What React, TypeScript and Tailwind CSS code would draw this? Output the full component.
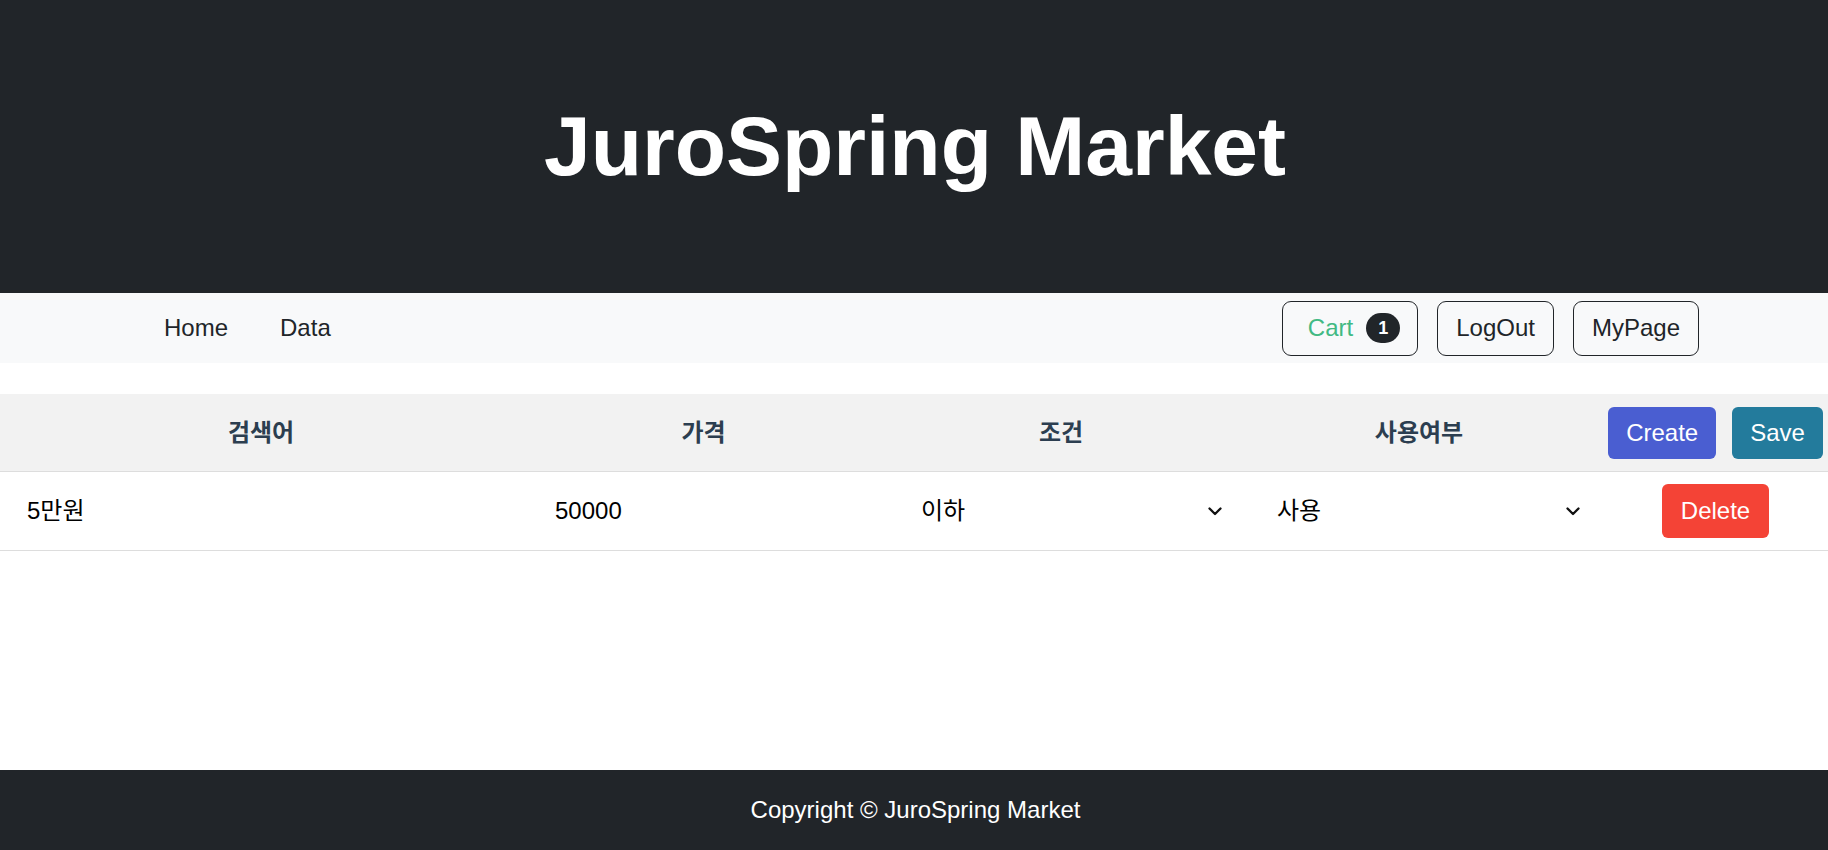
import React from "react";

const FONT = { fontFamily: '"Liberation Sans", Arial, "Noto Sans CJK KR", sans-serif' };

function Chevron() {
  return (
    <svg width="14" height="9" viewBox="0 0 14 9" fill="none" className="pointer-events-none">
      <path d="M1.5 1.5 L7 7 L12.5 1.5" stroke="#111" strokeWidth="2.3" strokeLinecap="round" strokeLinejoin="round" />
    </svg>
  );
}

function SelectCell({ value, options, pl, pr }: { value: string; options: string[]; pl: string; pr: string }) {
  return (
    <div className={`flex items-center justify-between h-full ${pl} ${pr}`}>
      <select
        defaultValue={value}
        className="appearance-none bg-transparent outline-none text-[24px] text-black flex-1"
        style={FONT}
      >
        {options.map((o) => (
          <option key={o} value={o}>
            {o}
          </option>
        ))}
      </select>
      <Chevron />
    </div>
  );
}

export default function App() {
  return (
    <div className="min-h-screen flex flex-col bg-white" style={FONT}>
      <header className="h-[293px] bg-[#212529] flex items-center justify-center">
        <h1 className="text-white text-[84px] font-bold leading-[1.2] pl-[2px]">JuroSpring Market</h1>
      </header>

      <nav className="h-[70px] bg-[#f8f9fa] flex items-center pl-[164px] pr-[129px]">
        <div className="flex items-center gap-[52px] text-[24px] text-[#212529]">
          <a href="#" className="leading-[36px]">Home</a>
          <a href="#" className="leading-[36px]">Data</a>
        </div>
        <div className="ml-auto flex items-center gap-[19px] text-[24px]">
          <button className="h-[55px] border border-[#212529] rounded-[9px] pl-[25px] pr-[17px] flex items-center gap-[13px]">
            <span className="text-[#42b983]">Cart</span>
            <span className="inline-flex items-center justify-center rounded-full bg-[#212529] text-white text-[18px] font-bold leading-none px-[12px] py-[6px] min-w-[34px]">
              1
            </span>
          </button>
          <button className="h-[55px] border border-[#212529] rounded-[9px] px-[18px] text-[#212529]">LogOut</button>
          <button className="h-[55px] border border-[#212529] rounded-[9px] px-[18px] text-[#212529]">MyPage</button>
        </div>
      </nav>

      <main className="flex-1 pt-[31px]">
        <div className="grid grid-cols-[522px_363px_352px_364px_227px]">
          <div className="h-[78px] bg-[#f2f2f2] border-b border-[#dddddd] flex items-center justify-center font-bold text-[24px] text-[#2c3e50]">
            검색어
          </div>
          <div className="h-[78px] bg-[#f2f2f2] border-b border-[#dddddd] flex items-center justify-center font-bold text-[24px] text-[#2c3e50]">
            가격
          </div>
          <div className="h-[78px] bg-[#f2f2f2] border-b border-[#dddddd] flex items-center justify-center font-bold text-[24px] text-[#2c3e50]">
            조건
          </div>
          <div className="h-[78px] bg-[#f2f2f2] border-b border-[#dddddd] flex items-center justify-center font-bold text-[24px] text-[#2c3e50]">
            사용여부
          </div>
          <div className="h-[78px] bg-[#f2f2f2] border-b border-[#dddddd] flex items-center justify-center gap-[16px] pl-[2px]">
            <button className="h-[52px] px-[18px] rounded-[6px] bg-[#4a5ed1] text-white text-[24px]">Create</button>
            <button className="h-[52px] px-[18px] rounded-[6px] bg-[#237b9c] text-white text-[24px]">Save</button>
          </div>

          <div className="h-[79px] border-b border-[#dddddd] flex items-center pl-[27px] text-[24px] text-black">
            5만원
          </div>
          <div className="h-[79px] border-b border-[#dddddd] flex items-center pl-[33px] text-[24px] text-black">
            50000
          </div>
          <div className="h-[79px] border-b border-[#dddddd]">
            <SelectCell value="이하" options={["이하", "이상"]} pl="pl-[36px]" pr="pr-[15px]" />
          </div>
          <div className="h-[79px] border-b border-[#dddddd]">
            <SelectCell value="사용" options={["사용", "미사용"]} pl="pl-[40px]" pr="pr-[21px]" />
          </div>
          <div className="h-[79px] border-b border-[#dddddd] flex items-center justify-center pl-[2px]">
            <button className="h-[54px] px-[19px] rounded-[6px] bg-[#f44336] text-white text-[24px]">Delete</button>
          </div>
        </div>
      </main>

      <footer className="h-[80px] bg-[#212529] flex items-center justify-center">
        <p className="text-white text-[24px] pl-[3px]">Copyright © JuroSpring Market</p>
      </footer>
    </div>
  );
}
